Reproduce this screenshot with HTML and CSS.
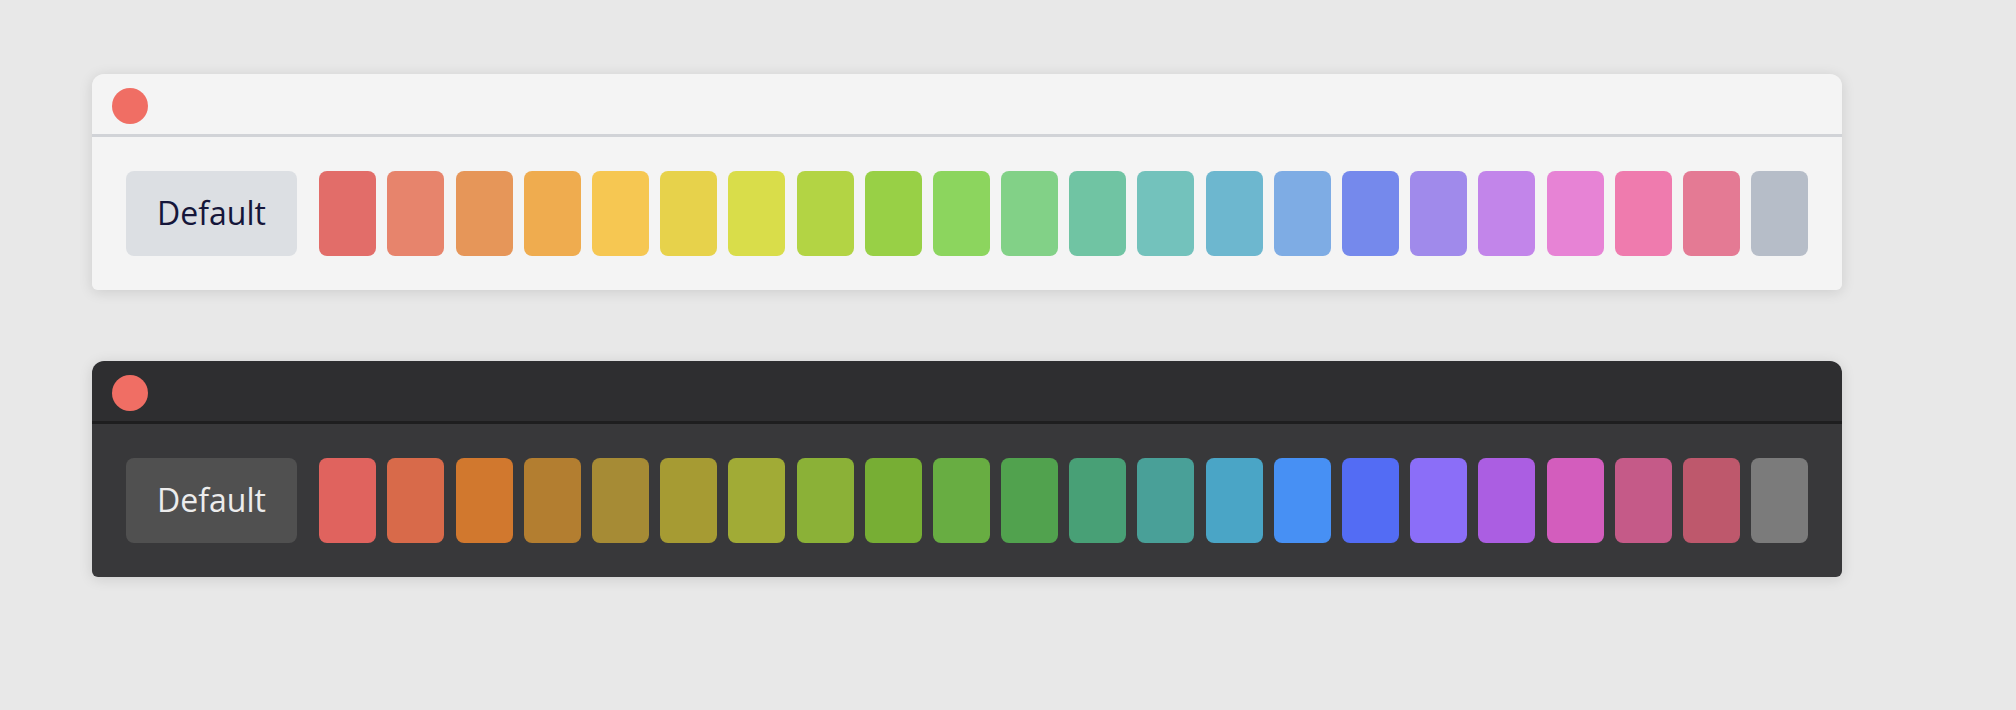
FILE: index.html
```html
<!DOCTYPE html>
<html lang="en">
<head>
    <meta charset="UTF-8">
    <meta name="viewport" content="width=device-width, initial-scale=1.0">
    <title>Palette</title>
    <link rel="stylesheet" href="styles.css">
</head>
<body>
    <div class="window light">
        <div class="titlebar"><span class="close"></span></div>
        <div class="palette">
            <button class="default">Default</button>
            <div class="swatch" style="background:#e26d69"></div>
            <div class="swatch" style="background:#e7846c"></div>
            <div class="swatch" style="background:#e69659"></div>
            <div class="swatch" style="background:#efac4f"></div>
            <div class="swatch" style="background:#f6c752"></div>
            <div class="swatch" style="background:#e7d24b"></div>
            <div class="swatch" style="background:#d9dd4a"></div>
            <div class="swatch" style="background:#b3d444"></div>
            <div class="swatch" style="background:#98d046"></div>
            <div class="swatch" style="background:#8cd55e"></div>
            <div class="swatch" style="background:#82d187"></div>
            <div class="swatch" style="background:#70c4a3"></div>
            <div class="swatch" style="background:#73c2bc"></div>
            <div class="swatch" style="background:#6db7cf"></div>
            <div class="swatch" style="background:#7eace4"></div>
            <div class="swatch" style="background:#7589ec"></div>
            <div class="swatch" style="background:#a08aeb"></div>
            <div class="swatch" style="background:#c285ea"></div>
            <div class="swatch" style="background:#e783d5"></div>
            <div class="swatch" style="background:#ef7bae"></div>
            <div class="swatch" style="background:#e47a94"></div>
            <div class="swatch" style="background:#b6bdc8"></div>
        </div>
    </div>

    <div class="window dark">
        <div class="titlebar"><span class="close"></span></div>
        <div class="palette">
            <button class="default">Default</button>
            <div class="swatch" style="background:#e0635e"></div>
            <div class="swatch" style="background:#d86a4a"></div>
            <div class="swatch" style="background:#d1782e"></div>
            <div class="swatch" style="background:#b37e30"></div>
            <div class="swatch" style="background:#a68b35"></div>
            <div class="swatch" style="background:#a69b33"></div>
            <div class="swatch" style="background:#a1ab36"></div>
            <div class="swatch" style="background:#8bb137"></div>
            <div class="swatch" style="background:#77ae34"></div>
            <div class="swatch" style="background:#68ad42"></div>
            <div class="swatch" style="background:#51a24e"></div>
            <div class="swatch" style="background:#48a076"></div>
            <div class="swatch" style="background:#49a098"></div>
            <div class="swatch" style="background:#4aa5c6"></div>
            <div class="swatch" style="background:#4790f4"></div>
            <div class="swatch" style="background:#536cf4"></div>
            <div class="swatch" style="background:#8b6ef8"></div>
            <div class="swatch" style="background:#ab5ee2"></div>
            <div class="swatch" style="background:#d35dbd"></div>
            <div class="swatch" style="background:#c55a88"></div>
            <div class="swatch" style="background:#be586c"></div>
            <div class="swatch" style="background:#7b7b7b"></div>
        </div>
    </div>
</body>
</html>
```

FILE: styles.css
```css
body {
    margin: 0;
    padding: 74px 0 0 92px;
    background-color: #e8e8e8;
    font-family: "Open Sans", "Noto Sans", sans-serif;
}

.window {
    width: 1750px;
    border-radius: 12px 12px 6px 6px;
    overflow: hidden;
    box-shadow: 0 2px 14px rgba(0, 0, 0, 0.12);
    margin-bottom: 71px;
}

.titlebar {
    height: 46px;
    padding: 14px 0 0 20px;
    border-bottom: 3px solid;
}

.close {
    display: block;
    width: 36px;
    height: 36px;
    border-radius: 50%;
    background-color: #f06e64;
}

.palette {
    display: flex;
    gap: 11.2px;
    padding: 34px;
}

.default {
    width: 171px;
    height: 85px;
    margin-right: 11px;
    border: none;
    border-radius: 8px;
    font-family: inherit;
    font-size: 32px;
    padding: 0 0 2px;
}

.swatch {
    flex: 1;
    height: 85px;
    border-radius: 8px;
}

/* light theme */
.light .titlebar {
    background-color: #f4f4f4;
    border-color: #d1d3d7;
}
.light .palette {
    background-color: #f4f4f4;
}
.light .default {
    background-color: #dcdfe3;
    color: #15163a;
}

/* dark theme */
.dark .titlebar {
    background-color: #2e2e30;
    border-color: #1e1e1f;
}
.dark .palette {
    background-color: #38383a;
}
.dark .default {
    background-color: #505050;
    color: #ececec;
}
```
